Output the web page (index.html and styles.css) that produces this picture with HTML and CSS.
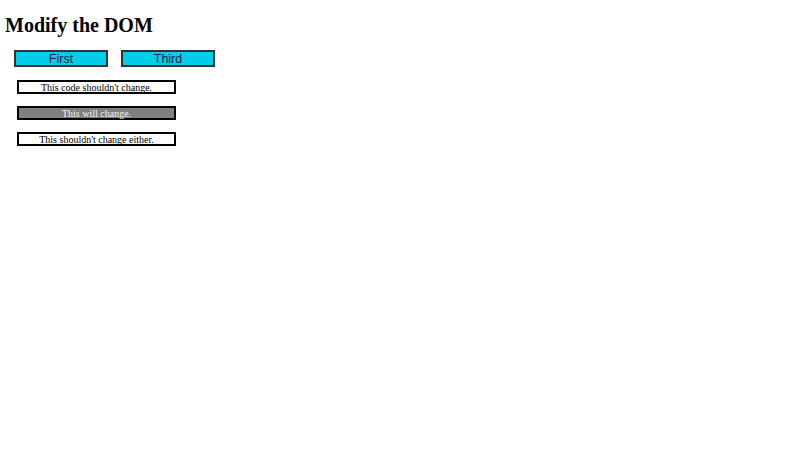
FILE: index.html
```html
<!DOCTYPE html>
<html>
<head>
<meta charset="utf-8">
<title>Modify the DOM</title>
<link rel="stylesheet" href="styles.css">
</head>
<body>
<h1 class="title">Modify the DOM</h1>
<div class="buttons">
  <button class="btn">First</button>
  <button class="btn">Third</button>
</div>
<div class="boxes">
  <div class="box">This code shouldn't change.</div>
  <div class="box box-changed">This will change.</div>
  <div class="box">This shouldn't change either.</div>
</div>
</body>
</html>
```
FILE: styles.css
```css
html, body {
  margin: 0;
  padding: 0;
  background: #ffffff;
}
body {
  font-family: "Liberation Serif", "Times New Roman", serif;
  color: #000;
}
.title {
  font-family: "Liberation Serif", "Times New Roman", serif;
  font-weight: bold;
  font-size: 20px;
  line-height: 23px;
  margin: 0;
  padding: 14px 0 0 5px;
}
.buttons {
  display: flex;
  gap: 13px;
  margin-top: 13px;
  padding-left: 14px;
}
.btn {
  box-sizing: border-box;
  width: 94px;
  height: 17px;
  margin: 0;
  padding: 0;
  background: #00cdea;
  border: 2px solid #333;
  font-family: "Liberation Sans", Arial, sans-serif;
  font-size: 12.5px;
  line-height: 14px;
  color: #1c2333;
}
.boxes {
  display: flex;
  flex-direction: column;
  gap: 12px;
  margin-top: 13px;
  padding-left: 17px;
}
.box {
  box-sizing: border-box;
  width: 159px;
  height: 14px;
  border: 2px solid #000;
  background: #fff;
  font-size: 10px;
  line-height: 11px;
  text-align: center;
  color: #000;
}
.box-changed {
  background: #808080;
  color: #f2f2f2;
}
```
